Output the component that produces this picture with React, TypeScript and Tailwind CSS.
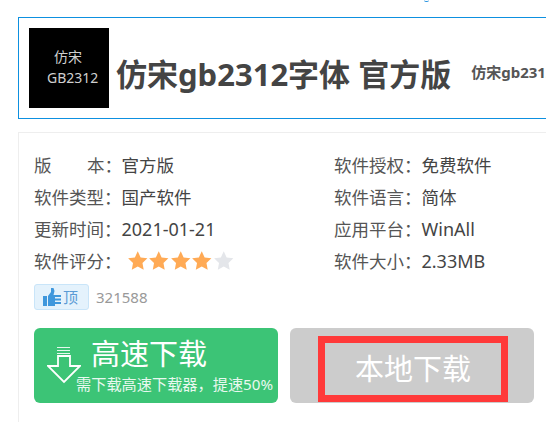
const CJK = '"Noto Sans","Noto Sans CJK SC",sans-serif';

function Star({ on }: { on: boolean }) {
  return (
    <svg width="21.5" height="21" viewBox="0 0 24 24" className="shrink-0">
      <path
        d="M12 1.5l3.3 7 7.7 1-5.6 5.3 1.4 7.7-6.8-3.7-6.8 3.7 1.4-7.7L1 9.5l7.7-1z"
        fill={on ? "#ffaa55" : "#e4e6ea"}
      />
    </svg>
  );
}

function Row({ label, value }: { label: React.ReactNode; value: React.ReactNode }) {
  return (
    <div className="flex h-8 items-center">
      <div className="w-[87.5px] shrink-0 text-[#555]">{label}</div>
      <div className="text-[#444]">{value}</div>
    </div>
  );
}

export default function App() {
  return (
    <div
      className="relative h-[422px] w-[546px] overflow-hidden bg-white pl-[18px] pt-[17px]"
      style={{ fontFamily: CJK }}
    >
      <div className="absolute left-[424px] top-0 h-[2px] w-[5px] rounded-b-full border-b border-[#2a94e0]" />
      <div className="flex h-[102px] w-[600px] items-center whitespace-nowrap border border-[#0d90e0] pl-[10px]">
        <div className="flex h-20 w-20 shrink-0 flex-col bg-black pt-[18px] text-[14px] leading-[21px] text-[#cfcfcf]">
          <span className="pl-[25px]">仿宋</span>
          <span className="pl-[18px]">GB2312</span>
        </div>
        <div className="ml-[7px] mt-[12px] text-[31px] font-bold leading-[40px] text-[#444]">仿宋gb2312字体 官方版</div>
        <div className="ml-[20px] mt-[8px] text-[15px] font-bold text-[#555]">仿宋gb2312字体官方版</div>
      </div>
      <div className="mt-[13px] h-[320px] w-[600px] border border-[#eee] pl-[15px] pt-4">
        <div className="grid w-[520px] grid-cols-[300px_1fr] text-[17.5px]">
          <div>
            <Row
              label={
                <span className="flex w-[70px] justify-between">
                  <span>版</span>
                  <span className="-mr-[18px]">本：</span>
                </span>
              }
              value="官方版"
            />
            <Row label="软件类型：" value="国产软件" />
            <Row label="更新时间：" value={<span className="text-[18px]">2021-01-21</span>} />
            <Row
              label="软件评分："
              value={
                <span className="-mt-[2px] ml-[5px] flex">
                  <Star on />
                  <Star on />
                  <Star on />
                  <Star on />
                  <Star on={false} />
                </span>
              }
            />
          </div>
          <div>
            <Row label="软件授权：" value="免费软件" />
            <Row label="软件语言：" value="简体" />
            <Row label="应用平台：" value={<span className="text-[18px]">WinAll</span>} />
            <Row label="软件大小：" value={<span className="text-[18px]">2.33MB</span>} />
          </div>
        </div>
        <div className="mt-[7px] flex items-center">
          <div className="flex h-[26px] w-[55px] items-center rounded-[3px] border border-[#c9e5f9] bg-[#e4f2fc] pl-2">
            <svg width="19" height="20" viewBox="0 0 19 20">
              <path d="M0 9h4v10H0z" fill="#3f97dc" />
              <path d="M5 9l3-4V1h2.5l1 3-1 4H18v2h-6v1.5h6v2h-6V15h6v2h-6v2H5z" fill="#3f97dc" />
            </svg>
            <span className="ml-[1px] text-[15px] leading-none text-[#5b9bd5]">顶</span>
          </div>
          <span className="ml-[7px] text-[15px] text-[#999]">321588</span>
        </div>
        <div className="mt-[18px] flex w-[500px] gap-3">
          <div className="flex h-[75px] w-[244px] rounded-[6px] bg-[#3cc476] text-white">
            <svg width="34" height="38" viewBox="0 0 34 38" className="ml-[13px] mt-[18px] shrink-0">
              <path d="M10 1.5h13M10 4.5h13M10 7.5h13" stroke="#e6f8ee" strokeWidth="1.2" fill="none" />
              <path d="M11 10h12v10h10L17 36 1 20h10z" stroke="#fff" strokeWidth="1.8" fill="none" />
            </svg>
            <div className="ml-[-5px] flex min-w-0 flex-col whitespace-nowrap">
              <span className="ml-[15px] mt-[4px] text-[29px] leading-[44px]">高速下载</span>
              <span className="mt-[-2px] text-[15.2px] leading-[20px] text-[#e8f8ef]">需下载高速下载器，提速50%</span>
            </div>
          </div>
          <div className="h-[75px] w-[244px] rounded-[6px] bg-[#cccccc] pl-7 pt-2">
            <div className="flex h-[66px] w-[190px] items-center justify-center border-[7px] border-[#ff3939] text-[29px] text-white">
              本地下载
            </div>
          </div>
        </div>
      </div>
    </div>
  );
}
